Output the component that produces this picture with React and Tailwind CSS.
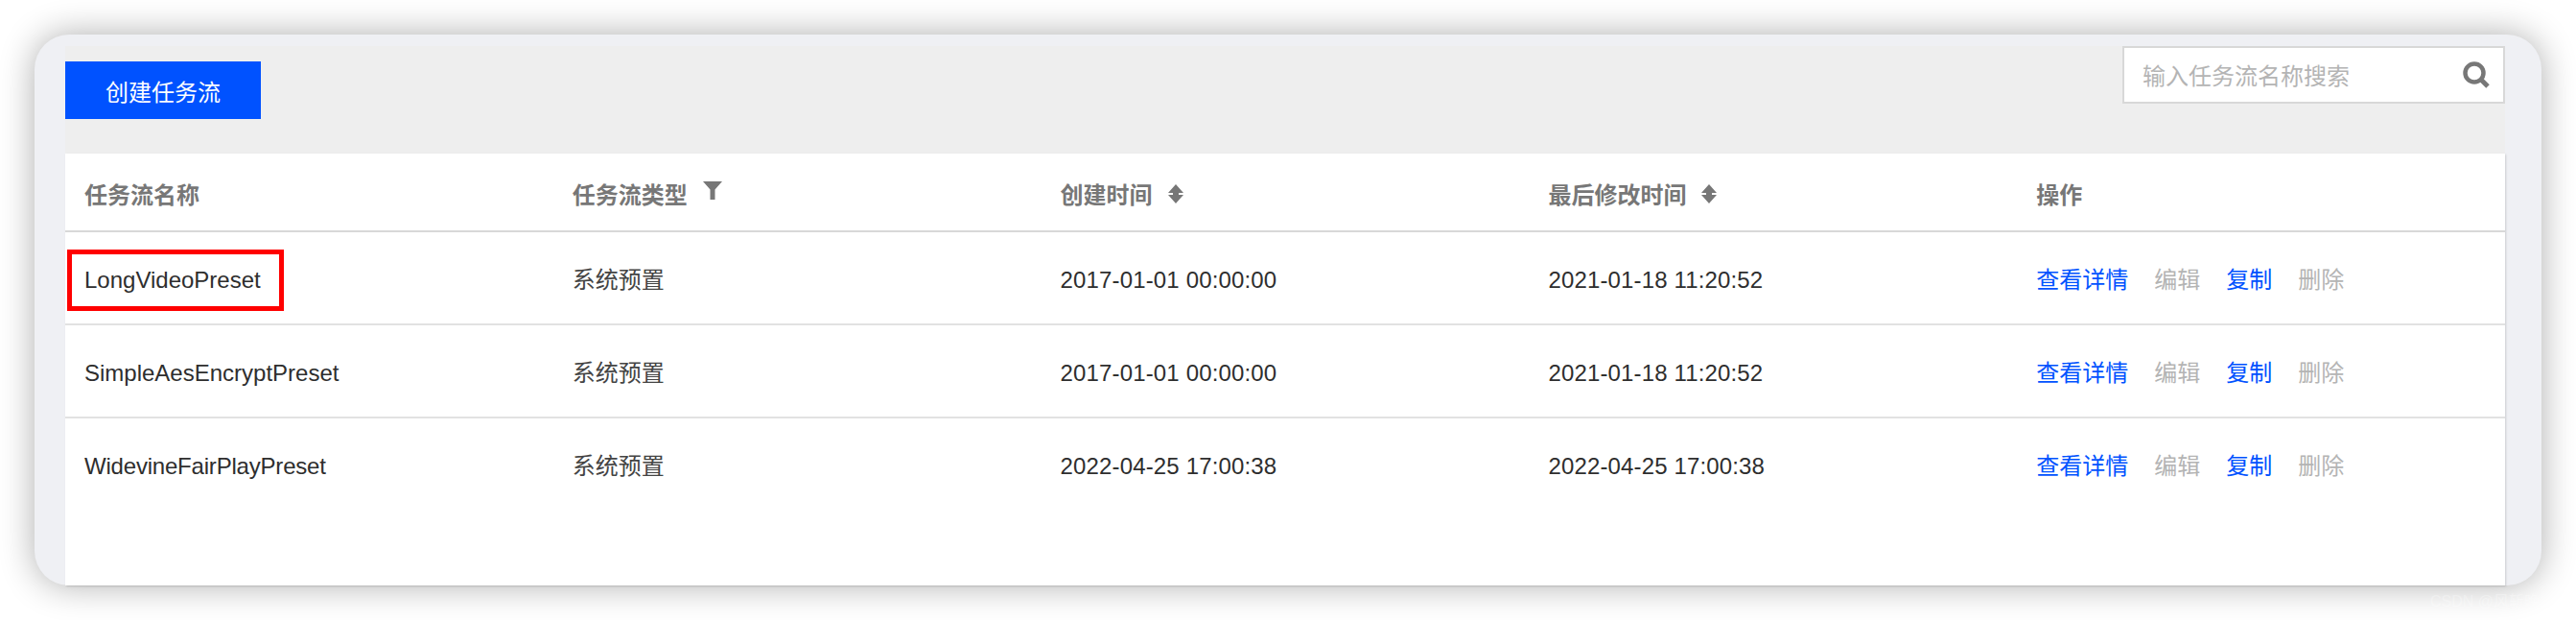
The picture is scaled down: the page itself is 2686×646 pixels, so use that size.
const sans = "font-['Liberation_Sans','Noto_Sans_CJK_SC',sans-serif]";

function Filter() {
  return (
    <svg width="20" height="20" viewBox="0 0 20 20" className="mb-[10px] ml-4 shrink-0">
      <path d="M0 0H20L12.5 8.5V19H7.5V8.5Z" fill="#777" />
    </svg>
  );
}

function Sort() {
  return (
    <svg width="16" height="20" viewBox="0 0 16 20" className="mb-1 ml-4 shrink-0">
      <path d="M8 0L16 9H11V11H16L8 20L0 11H5V9H0Z" fill="#777" />
    </svg>
  );
}

function Search() {
  return (
    <svg width="28" height="28" viewBox="0 0 28 28" className="shrink-0">
      <circle cx="12" cy="12" r="9.5" fill="none" stroke="#777" strokeWidth="4.5" />
      <path d="M18 18L26 26" stroke="#777" strokeWidth="5" />
    </svg>
  );
}

const rows = [
  ["LongVideoPreset", "2017-01-01 00:00:00", "2021-01-18 11:20:52"],
  ["SimpleAesEncryptPreset", "2017-01-01 00:00:00", "2021-01-18 11:20:52"],
  ["WidevineFairPlayPreset", "2022-04-25 17:00:38", "2022-04-25 17:00:38"],
];

export default function App() {
  return (
    <div className={`relative h-[646px] w-[2686px] overflow-hidden bg-white pt-9 pl-9 ${sans}`}>
      <div className="h-[574px] w-[2614px] rounded-[36px] bg-[#eff0f4] pt-3 pr-[38px] pl-8 shadow-[0_0_36px_rgba(0,0,0,0.32)]">
        <div className="h-[112px] bg-[#eeeeee]">
          <div className="flex items-start justify-between">
            <button className="mt-4 h-[60px] w-[204px] bg-[#0052ff] pt-[5px] text-2xl text-white">创建任务流</button>
            <div className="flex h-[60px] w-[399px] items-center justify-between border-2 border-[#d8d8d8] bg-white pr-[14px] pl-[19px]">
              <span className="pt-1 text-2xl text-[#b4b4b4]">输入任务流名称搜索</span>
              <Search />
            </div>
          </div>
        </div>
        <div className="h-[450px] bg-white shadow-[1px_1px_2px_rgba(0,0,0,0.15)]">
          <div className="grid h-[82px] grid-cols-5 items-center border-b-2 border-[#d8d8d8] pt-2 text-2xl font-bold text-[#777777]">
            <div className="px-5">任务流名称</div>
            <div className="flex items-center px-5">任务流类型<Filter /></div>
            <div className="flex items-center px-5">创建时间<Sort /></div>
            <div className="flex items-center px-5">最后修改时间<Sort /></div>
            <div className="px-5">操作</div>
          </div>
          {rows.map((r, i) => (
            <div key={r[0]} className={`grid h-[97px] grid-cols-5 items-center border-b-2 pt-1 text-2xl text-[#2e2e2e] ${i < 2 ? "border-[#e2e2e2]" : "border-transparent"}`}>
              <div className={`px-5 ${i === 2 ? "tracking-[-0.2px]" : ""}`}>
                {i === 0 ? (
                  <span className="-ml-[18px] flex h-[64px] w-[226px] items-center border-[5px] border-[#ff0000] pl-[13px]">{r[0]}</span>
                ) : (
                  r[0]
                )}
              </div>
              <div className="px-5 text-[#444444]">系统预置</div>
              <div className="px-5 tracking-[0.15px]">{r[1]}</div>
              <div className="px-5 tracking-[0.15px]">{r[2]}</div>
              <div className="flex gap-[27px] px-5">
                <span className="text-[#0052ff]">查看详情</span>
                <span className="text-[#b4b4b4]">编辑</span>
                <span className="text-[#0052ff]">复制</span>
                <span className="text-[#b4b4b4]">删除</span>
              </div>
            </div>
          ))}
        </div>
      </div>
      <span className="absolute top-[615px] left-[2534px] text-base whitespace-nowrap text-white/30">CSDN @风斩晚</span>
    </div>
  );
}
